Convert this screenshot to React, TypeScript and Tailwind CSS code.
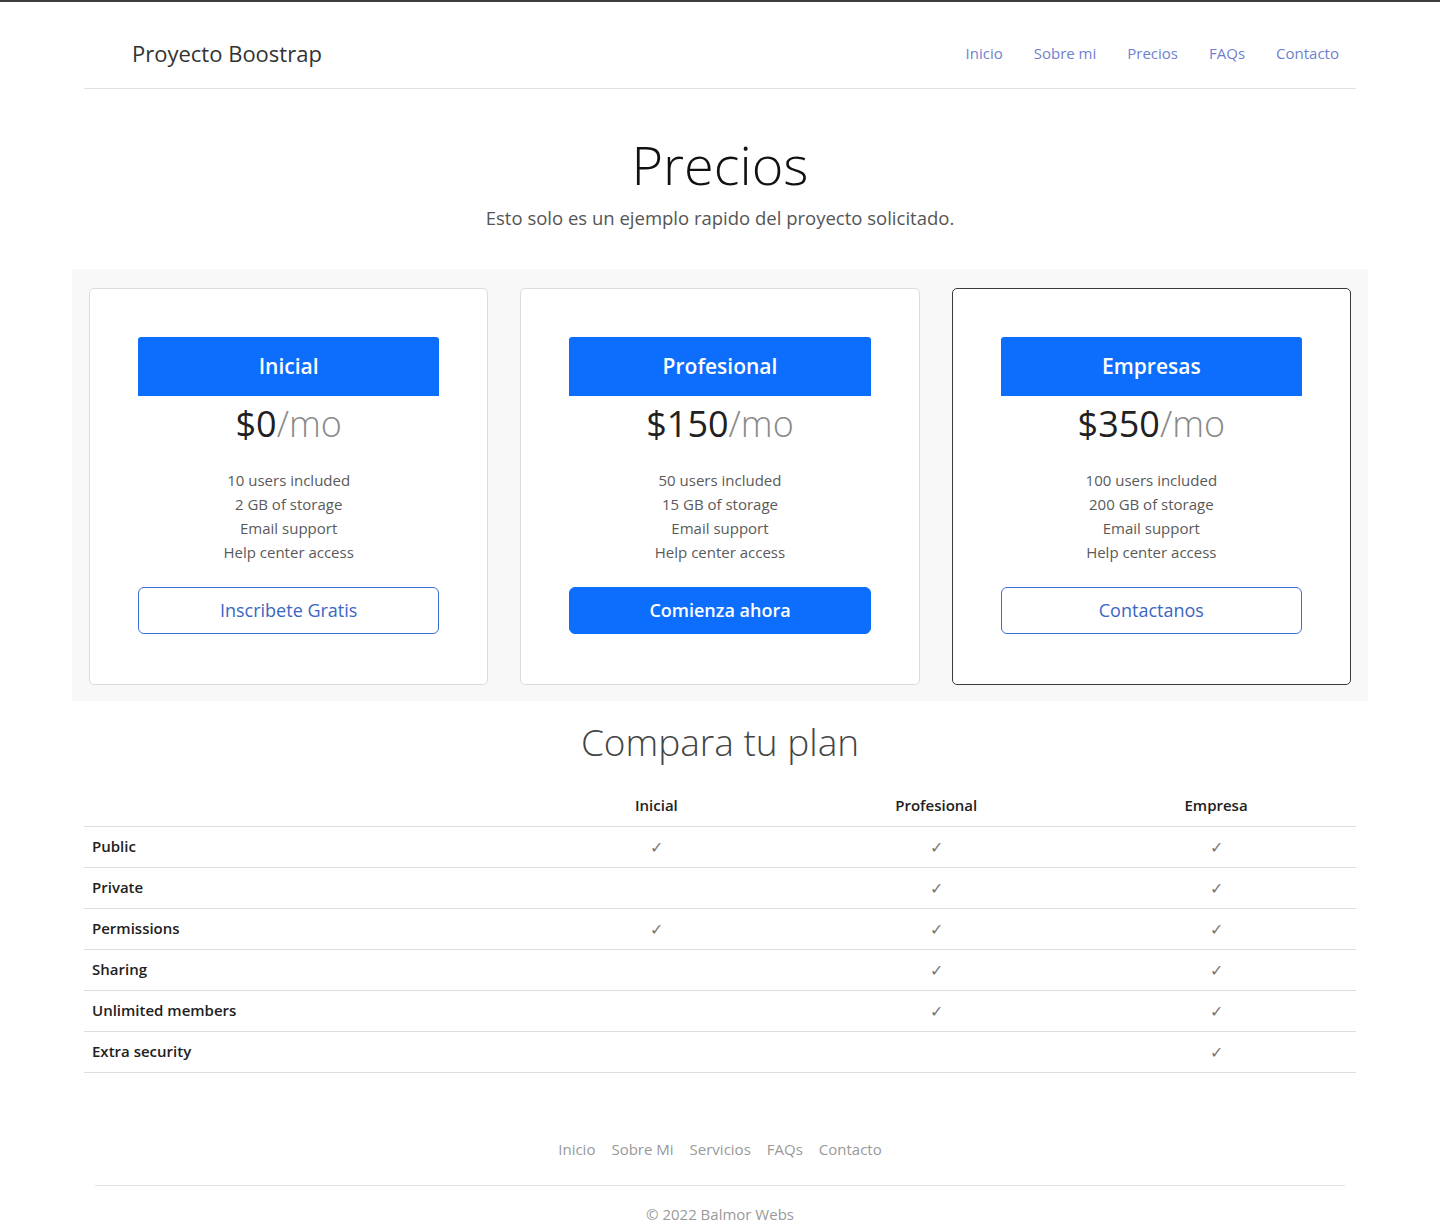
import React from 'react';

const navLinks = ['Inicio', 'Sobre mi', 'Precios', 'FAQs', 'Contacto'];
const footerLinks = ['Inicio', 'Sobre Mi', 'Servicios', 'FAQs', 'Contacto'];

const plans = [
  {
    name: 'Inicial',
    price: '$0',
    features: ['10 users included', '2 GB of storage', 'Email support', 'Help center access'],
    cta: 'Inscribete Gratis',
    filled: false,
    dark: false,
  },
  {
    name: 'Profesional',
    price: '$150',
    features: ['50 users included', '15 GB of storage', 'Email support', 'Help center access'],
    cta: 'Comienza ahora',
    filled: true,
    dark: false,
  },
  {
    name: 'Empresas',
    price: '$350',
    features: ['100 users included', '200 GB of storage', 'Email support', 'Help center access'],
    cta: 'Contactanos',
    filled: false,
    dark: true,
  },
];

// [label, inicial, profesional, empresa]
const rows: [string, boolean, boolean, boolean][] = [
  ['Public', true, true, true],
  ['Private', false, true, true],
  ['Permissions', true, true, true],
  ['Sharing', false, true, true],
  ['Unlimited members', false, true, true],
  ['Extra security', false, false, true],
];

function PlanCard({plan}: {plan: (typeof plans)[number]}) {
  return (
    <div
      className={`flex flex-col items-center rounded-[5px] border bg-white px-12 pt-12 pb-[50px] ${
        plan.dark ? 'border-[#3a3a3a]' : 'border-[#dcdcdc]'
      }`}
    >
      <div className="flex h-[59px] w-full items-center justify-center rounded-t-[3px] bg-[#0d6efd]">
        <h4 className="text-[21px] font-semibold text-white">{plan.name}</h4>
      </div>
      <div className="mt-[5px] text-[36px] leading-[46px] text-[#212121]">
        {plan.price}
        <span className="font-light text-[#8a8a8a]">/mo</span>
      </div>
      <ul className="mt-[21px] text-center text-[15px] leading-[24px] text-[#5a5a5a]">
        {plan.features.map((f) => (
          <li key={f}>{f}</li>
        ))}
      </ul>
      <button
        className={`mt-[23px] h-[47px] w-full rounded-[6px] border text-[18px] ${
          plan.filled
            ? 'border-[#0d6efd] bg-[#0d6efd] font-semibold text-white'
            : 'border-[#3b6fd8] bg-white text-[#3a66c4]'
        }`}
      >
        {plan.cta}
      </button>
    </div>
  );
}

function Check({on}: {on: boolean}) {
  return <td className="text-center text-[16px] text-[#777]">{on ? '✓' : ''}</td>;
}

export default function App() {
  return (
    <div className="min-h-[1228px] border-t-2 border-[#3c3c3c] bg-white font-['Open_Sans',sans-serif] text-[#212121]">
      <header className="mx-auto flex h-[87px] w-[1272px] items-center justify-between border-b border-[#e2e2e2] pt-[16px] pl-12 pr-[17px]">
        <span className="text-[22px] text-[#333]">Proyecto Boostrap</span>
        <nav className="flex gap-[31px] text-[15px] text-[#6f7fd0]">
          {navLinks.map((l) => (
            <a key={l} href="#">
              {l}
            </a>
          ))}
        </nav>
      </header>

      <div className="mt-[42px] text-center">
        <h1 className="text-[54px] leading-[67px] font-light text-[#111]">Precios</h1>
        <p className="mt-[6px] text-[18.5px] leading-[27px] text-[#555]">
          Esto solo es un ejemplo rapido del proyecto solicitado.
        </p>
      </div>

      <section className="mx-auto mt-[38px] grid w-[1296px] grid-cols-3 gap-[32px] bg-[#f8f8f8] px-[17px] pt-[19px] pb-[16px]">
        {plans.map((p) => (
          <PlanCard key={p.name} plan={p} />
        ))}
      </section>

      <h2 className="mt-[18px] text-center text-[37px] leading-[46px] font-light text-[#444]">Compara tu plan</h2>

      <table className="mx-auto mt-[20px] w-[1272px] table-fixed border-collapse text-[15px]">
        <thead>
          <tr className="h-[41px] border-b border-[#dedede]">
            <th className="w-[34%]"></th>
            <th className="w-[22%] text-center font-semibold">Inicial</th>
            <th className="w-[22%] text-center font-semibold">Profesional</th>
            <th className="w-[22%] text-center font-semibold">Empresa</th>
          </tr>
        </thead>
        <tbody>
          {rows.map(([label, a, b, c]) => (
            <tr key={label} className="h-[41px] border-b border-[#dedede]">
              <th className="px-2 text-left font-semibold">{label}</th>
              <Check on={a} />
              <Check on={b} />
              <Check on={c} />
            </tr>
          ))}
        </tbody>
      </table>

      <footer className="mx-auto mt-[64px] w-[1250px]">
        <div className="flex justify-center gap-4 border-b border-[#e2e2e2] pb-[24px] text-[15px] leading-[24px] text-[#999]">
          {footerLinks.map((l) => (
            <a key={l} href="#">
              {l}
            </a>
          ))}
        </div>
        <p className="pt-[16px] text-center text-[15px] leading-[24px] text-[#999]">© 2022 Balmor Webs</p>
      </footer>
    </div>
  );
}
